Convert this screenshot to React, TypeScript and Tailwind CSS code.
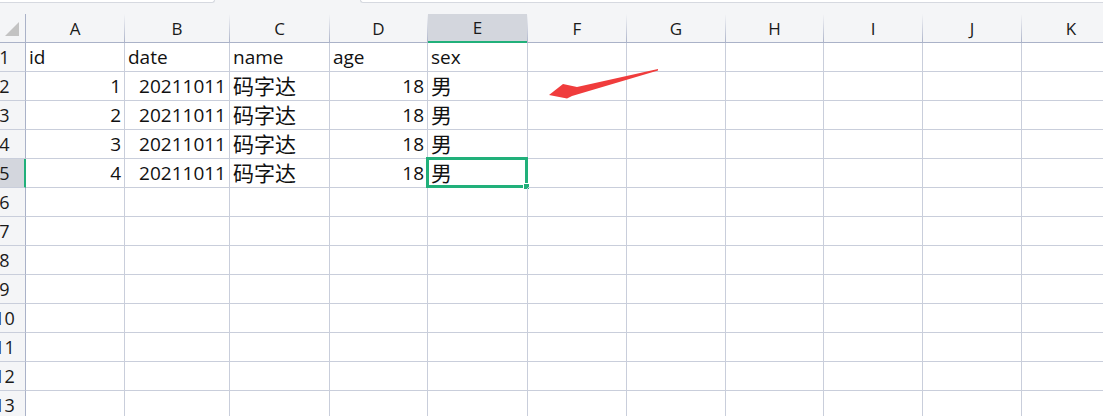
import React from 'react';

const cols = [
    { key: 'A', w: 'w-[99px]' },
    { key: 'B', w: 'w-[105px]' },
    { key: 'C', w: 'w-[100px]' },
    { key: 'D', w: 'w-[98px]' },
    { key: 'E', w: 'w-[100px]' },
    { key: 'F', w: 'w-[99px]' },
    { key: 'G', w: 'w-[99px]' },
    { key: 'H', w: 'w-[98px]' },
    { key: 'I', w: 'w-[99px]' },
    { key: 'J', w: 'w-[99px]' },
    { key: 'K', w: 'w-[99px]' },
];

type Cell = { v: string; right?: boolean; cjk?: boolean };

const data: Cell[][] = [
    [{ v: 'id' }, { v: 'date' }, { v: 'name' }, { v: 'age' }, { v: 'sex' }],
    ...[1, 2, 3, 4].map((n) => [
        { v: String(n), right: true },
        { v: '20211011', right: true },
        { v: '码字达', cjk: true },
        { v: '18', right: true },
        { v: '男', cjk: true },
    ]),
];

const rowNums = [1, 2, 3, 4, 5, 6, 7, 8, 9, 10, 11, 12, 13];

export default function App() {
    return (
        <div className="relative w-[1103px] h-[416px] overflow-hidden bg-[#f4f5f7] font-['Open_Sans','Noto_Sans_CJK_SC',sans-serif] text-[#111]">
            {/* bottom edge of name box / formula bar */}
            <div className="flex h-[14px]">
                <div className="w-[215px] h-[3px] bg-white border-b border-r border-[#d6d9e0] rounded-br-[4px]"></div>
                <div className="ml-[145px] flex-1 h-[3px] bg-white border-b border-l border-[#d6d9e0] rounded-bl-[4px]"></div>
            </div>

            {/* column headers */}
            <div className="flex h-[29px] -ml-[16px] border-b border-[#aab2c8]">
                <div className="w-[42px] shrink-0 flex items-end justify-end pr-[6px] pb-[6px] border-r border-[#aab2c8]">
                    <svg width="14" height="14" viewBox="0 0 14 14">
                        <polygon points="14,0 14,14 0,14" fill="#c3c3c3" />
                    </svg>
                </div>
                {cols.map((c) => (
                    <div
                        key={c.key}
                        className={`${c.w} shrink-0 flex ${c.key === 'E' ? 'bg-[#d3d6dd]' : ''}`}
                    >
                        <div
                            className={`flex-1 flex items-center justify-center pt-[1px] text-[17px] text-[#1a1a1a] ${
                                c.key === 'E' ? 'border-b-2 border-[#21b07a] -mb-[1px]' : ''
                            }`}
                        >
                            {c.key}
                        </div>
                        <div className="w-px bg-linear-to-b from-[#f4f5f7] to-[#aeb5ca]"></div>
                    </div>
                ))}
            </div>

            {/* body */}
            <div className="flex flex-col -ml-[16px] bg-white">
                {rowNums.map((r, ri) => (
                    <div key={r} className="flex h-[29px] shrink-0">
                        <div
                            className={`w-[42px] shrink-0 flex items-center justify-center text-[18px] text-[#1a1a1a] border-b border-[#c9cedb] ${
                                r === 5
                                    ? 'bg-[#d3d6dd] border-r-2 border-r-[#21b07a] pl-[1px]'
                                    : 'bg-[#f4f5f7] border-r border-r-[#aab2c8]'
                            }`}
                        >
                            {r}
                        </div>
                        {cols.map((c, ci) => {
                            const cell = data[ri]?.[ci];
                            const selected = r === 5 && c.key === 'E';
                            return (
                                <div
                                    key={c.key}
                                    className={`${c.w} shrink-0 relative flex items-center border-r border-b border-[#c9cedb] px-[3px] leading-[30px] ${
                                        cell?.right ? 'justify-end' : 'justify-start'
                                    } ${cell?.cjk ? 'text-[21px]' : 'text-[19px]'}`}
                                >
                                    {cell && <span className="whitespace-nowrap">{cell.v}</span>}
                                    {selected && (
                                        <div className="absolute -left-[2px] -top-[2px] -right-[1px] -bottom-[1px] border-[3px] border-[#21b07a]">
                                            <div className="absolute -right-[5px] -bottom-[5px] w-[7px] h-[7px] bg-[#21b07a] border border-white"></div>
                                        </div>
                                    )}
                                </div>
                            );
                        })}
                    </div>
                ))}
            </div>

            {/* annotation arrow */}
            <svg
                className="absolute left-0 top-0 pointer-events-none"
                width="1103"
                height="416"
                viewBox="0 0 1103 416"
            >
                <polygon
                    points="549,95 563,84 577,87 658,69 658,70.5 572,96 567,98.5"
                    fill="#f03c3c"
                />
            </svg>
        </div>
    );
}
